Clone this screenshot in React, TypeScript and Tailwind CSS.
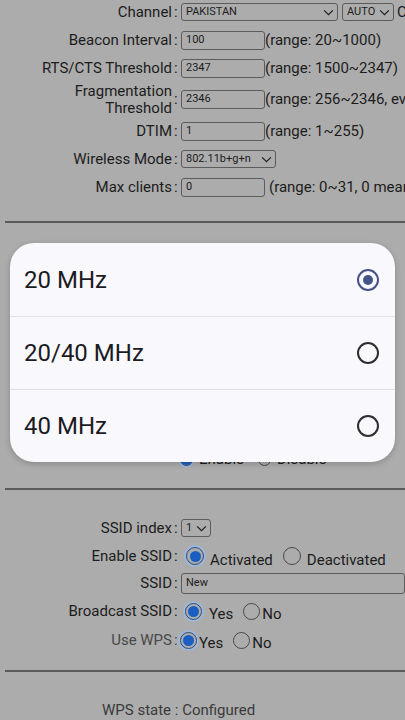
import React from 'react';

const font = { fontFamily: 'Roboto, "Noto Sans", sans-serif' };

const Chevron = ({ className = '' }: { className?: string }) => (
  <svg viewBox="0 0 12 8" className={`w-[11px] h-[7px] ${className}`} fill="none" stroke="#1e1e1e" strokeWidth="1.4">
    <path d="M1 1.5l5 5 5-5" />
  </svg>
);

const Row = ({ label, children, h = 'h-[28px]', muted = false }: { label: React.ReactNode; children?: React.ReactNode; h?: string; muted?: boolean }) => (
  <div className={`flex items-center ${h}`}>
    <div className={`w-[172px] text-right leading-[17px] ${muted ? 'text-[#484848]' : 'text-[#1c1c1c]'}`}>{label}</div>
    <div className={`w-[9px] pl-[2px] ${muted ? 'text-[#484848]' : 'text-[#1c1c1c]'}`}>{label ? ':' : ''}</div>
    <div className="flex items-center flex-1 min-w-0 whitespace-nowrap">{children}</div>
  </div>
);

const Input = ({ value, w = 'w-[84px]' }: { value: string; w?: string }) => (
  <div className={`${w} h-[19px] border border-[#5c5c5c] rounded-[3px] text-[11px] pl-[4px] flex items-center shrink-0 text-[#1c1c1c]`}>{value}</div>
);

const Select = ({ value, w }: { value: string; w: string }) => (
  <div className={`${w} h-[18px] border border-[#5c5c5c] rounded-[3px] text-[11px] pl-[4px] pr-[3px] flex items-center justify-between shrink-0 text-[#1c1c1c]`}>
    <span>{value}</span>
    <Chevron />
  </div>
);

const PageRadio = ({ on, size = 'w-[17px] h-[17px]' }: { on?: boolean; size?: string }) => (
  <div className={`${size} rounded-full border-[1.5px] shrink-0 flex items-center justify-center ${on ? 'border-[#2a4f86] shadow-[0_0_0_2px_#9fb6d6]' : 'border-[#4a4a4a]'}`}>
    {on && <div className="w-[11px] h-[11px] rounded-full bg-[#1b5ec2]" />}
  </div>
);

const Line = ({ className = '' }: { className?: string }) => (
  <div className={`ml-[5px] h-[2px] bg-[#5a5a5a] ${className}`} />
);

const options = ['20 MHz', '20/40 MHz', '40 MHz'];

export default function App() {
  return (
    <div className="relative w-[405px] h-[720px] overflow-hidden bg-[#acacac] text-[15px]" style={font}>
      <div className="mt-[-2px]">
        <Row label="Channel">
          <Select value="PAKISTAN" w="w-[157px]" />
          <div className="ml-[4px]"><Select value="AUTO" w="w-[52px]" /></div>
          <span className="ml-[3px] text-[#1c1c1c]">Current</span>
        </Row>
        <Row label="Beacon Interval">
          <Input value="100" />
          <span className="text-[#1c1c1c]">(range: 20~1000)</span>
        </Row>
        <Row label="RTS/CTS Threshold">
          <Input value="2347" />
          <span className="text-[#1c1c1c]">(range: 1500~2347)</span>
        </Row>
        <Row label={<>Fragmentation<br />Threshold</>} h="h-[35px]">
          <Input value="2346" />
          <span className="text-[#1c1c1c]">(range: 256~2346, even numbers only)</span>
        </Row>
        <Row label="DTIM">
          <Input value="1" />
          <span className="text-[#1c1c1c]">(range: 1~255)</span>
        </Row>
        <Row label="Wireless Mode">
          <Select value="802.11b+g+n" w="w-[95px]" />
        </Row>
        <Row label="Max clients">
          <Input value="0" />
          <span className="ml-[4px] text-[#1c1c1c]">(range: 0~31, 0 means no limit)</span>
        </Row>
      </div>

      <Line className="mt-[20px]" />

      <div className="h-[265px] flex flex-col justify-end pb-[15px]">
        <Row label="Channel Bandwidth">
          <Select value="20 MHz" w="w-[80px]" />
        </Row>
        <Row label="">
          <div className="flex items-center">
            <div className="ml-[-1px]"><PageRadio on size="w-[13px] h-[13px]" /></div>
            <span className="ml-[6px] text-[#1c1c1c]">Enable</span>
            <div className="ml-[14px]"><PageRadio size="w-[13px] h-[13px]" /></div>
            <span className="ml-[6px] text-[#1c1c1c]">Disable</span>
          </div>
        </Row>
      </div>

      <Line />

      <div className="pt-[24px]">
        <Row label="SSID index">
          <Select value="1" w="w-[30px]" />
        </Row>
        <Row label="Enable SSID" h="h-[28px]">
          <div className="flex items-center">
            <div className="ml-[5px]"><PageRadio on size="w-[18px] h-[18px]" /></div>
            <span className="ml-[6px] pt-[8px] text-[#1c1c1c]">Activated</span>
            <div className="ml-[10px]"><PageRadio size="w-[18px] h-[18px]" /></div>
            <span className="ml-[6px] pt-[8px] text-[#1c1c1c]">Deactivated</span>
          </div>
        </Row>
        <Row label="SSID" h="h-[27px]">
          <div className="w-[240px] h-[21px] border border-[#5c5c5c] rounded-[3px] text-[11px] pl-[4px] flex items-center text-[#1c1c1c]">New</div>
        </Row>
        <Row label="Broadcast SSID" h="h-[29px]">
          <div className="flex items-center">
            <div className="ml-[4px]"><PageRadio on /></div>
            <span className="ml-[7px] pt-[6px] text-[#1c1c1c]">Yes</span>
            <div className="ml-[10px]"><PageRadio /></div>
            <span className="ml-[2px] pt-[6px] text-[#1c1c1c]">No</span>
          </div>
        </Row>
        <Row label="Use WPS" h="h-[28px]" muted>
          <div className="flex items-center">
            <div className="-ml-[1px]"><PageRadio on /></div>
            <span className="ml-[2px] pt-[6px] text-[#1c1c1c]">Yes</span>
            <div className="ml-[10px]"><PageRadio /></div>
            <span className="ml-[2px] pt-[6px] text-[#1c1c1c]">No</span>
          </div>
        </Row>
      </div>

      <Line className="mt-[16px]" />

      <div className="mt-[27px] pl-[102px] text-[#3a3a3a]">WPS state : Configured</div>

      <div className="absolute left-[10px] top-[243px] w-[385px] rounded-[24px] bg-[#f9f8fd] shadow-[0_2px_6px_rgba(0,0,0,0.2)] overflow-hidden">
        {options.map((o, i) => (
          <div key={o} className={`h-[73px] flex items-center justify-between pl-[14px] pr-[16px] ${i > 0 ? 'border-t border-[#e2e0e7]' : ''}`}>
            <span className="text-[24px] text-[#1c1b1f]">{o}</span>
            <div className={`w-[22px] h-[22px] rounded-full border-2 flex items-center justify-center ${i === 0 ? 'border-[#44548a]' : 'border-[#2e2e32]'}`}>
              {i === 0 && <div className="w-[10px] h-[10px] rounded-full bg-[#44548a]" />}
            </div>
          </div>
        ))}
      </div>
    </div>
  );
}
